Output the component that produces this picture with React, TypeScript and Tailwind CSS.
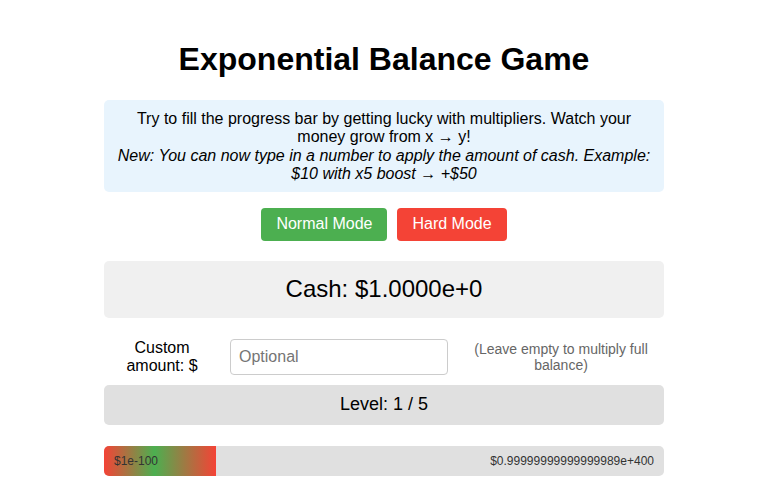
import { useState } from 'react';

export default function App() {
  const [amount, setAmount] = useState('');
  const progress = 20;

  return (
    <main className="min-h-screen bg-white px-5 pt-[41px] text-black" style={{ fontFamily: '"Liberation Sans", Arial, sans-serif' }}>
      <div className="mx-auto w-[560px]">
        <h1 className="text-center text-[32px] font-bold leading-[37px]">Exponential Balance Game</h1>

        <div className="mt-[22px] rounded-[5px] bg-[#e8f4fd] px-[10px] pb-[8px] pt-[10px] text-center text-base leading-[18.4px]">
          <p>Try to fill the progress bar by getting lucky with multipliers. Watch your money grow from x → y!</p>
          <p className="italic">New: You can now type in a number to apply the amount of cash. Example: $10 with x5 boost → +$50</p>
        </div>

        <div className="mt-4 flex justify-center gap-[10px]">
          <button className="h-[33px] rounded-[4px] bg-[#4caf50] px-[15px] text-base text-white">Normal Mode</button>
          <button className="h-[33px] rounded-[4px] bg-[#f44336] px-[15px] text-base text-white">Hard Mode</button>
        </div>

        <div className="mt-5 flex h-[57px] items-center justify-center rounded-[5px] bg-[#f0f0f0] text-[24px]">
          Cash: $1.0000e+0
        </div>

        <div className="mt-[21px] flex h-[36px] items-center gap-[10px]">
          <label className="w-[116px] text-center text-base leading-[18px]">Custom amount: $</label>
          <input
            className="h-[36px] w-[218px] rounded-[4px] border border-[#ccc] px-[8px] text-base outline-none placeholder:text-[#757575]"
            placeholder="Optional"
            value={amount}
            onChange={(e) => setAmount(e.target.value)}
          />
          <span className="flex-1 text-center text-sm leading-[16px] text-[#666]">(Leave empty to multiply full balance)</span>
        </div>

        <div className="mt-[10px] flex h-[40px] items-center justify-center rounded-[5px] bg-[#e0e0e0] text-[18px]">
          Level: 1 / 5
        </div>

        <div className="relative mt-[21px] h-[30px] overflow-hidden rounded-[5px] bg-[#e0e0e0]">
          <div
            className="h-full bg-[linear-gradient(to_right,#f44336,#4caf50_45%,#f44336)]"
            style={{ width: `${progress}%` }}
          />
          <span className="absolute left-[10px] top-0 flex h-full items-center text-xs text-[#333]">$1e-100</span>
          <span className="absolute right-[10px] top-0 flex h-full items-center text-xs text-[#333]">$0.99999999999999989e+400</span>
        </div>
      </div>
    </main>
  );
}
